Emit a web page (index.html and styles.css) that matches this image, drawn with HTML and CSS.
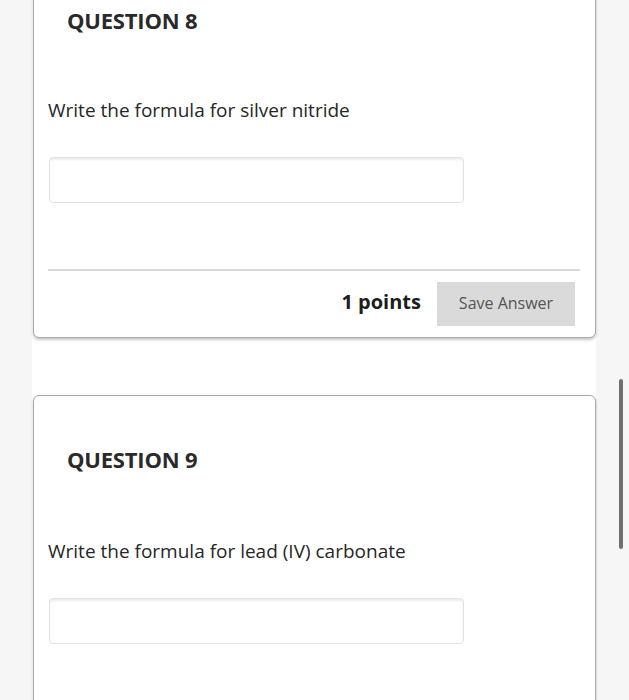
FILE: index.html
```html
<!DOCTYPE html>
<html>
<head>
<meta charset="utf-8">
<link rel="stylesheet" href="styles.css">
</head>
<body>
<div class="page">
  <div class="column">
    <section class="card card-first">
      <h2 class="q-title">QUESTION 8</h2>
      <p class="q-text">Write the formula for silver nitride</p>
      <div class="answer"></div>
      <div class="footer">
        <span class="points">1 points</span>
        <button class="save">Save Answer</button>
      </div>
    </section>
    <section class="card card-next">
      <h2 class="q-title">QUESTION 9</h2>
      <p class="q-text">Write the formula for lead (IV) carbonate</p>
      <div class="answer"></div>
    </section>
  </div>
  <div class="scrollbar"></div>
</div>
</body>
</html>
```
FILE: styles.css
```css
html, body {
  margin: 0;
  padding: 0;
  background: #f6f6f6;
  font-family: "Open Sans", "Liberation Sans", sans-serif;
  color: #222;
  overflow: hidden;
}
.page {
  position: relative;
  height: 700px;
  overflow: hidden;
}
.column {
  margin-left: 32px;
  width: 564px;
  background: #fff;
  min-height: 700px;
  padding-top: 1px;
  box-sizing: border-box;
}
.card {
  width: 563px;
  margin-left: 1px;
  box-sizing: border-box;
  border: 1px solid #a8a8a8;
  border-radius: 6px;
  background: #fff;
  box-shadow: 0 2px 3px rgba(0,0,0,0.22);
  padding: 47px 15px 11px 14px;
}
.card-first {
  margin-top: -44px;
}
.card-next {
  margin-top: 57px;
  min-height: 400px;
  padding-top: 48px;
}
.q-title {
  margin: 0 0 0 19px;
  font-size: 22px;
  line-height: 30px;
  font-weight: 700;
  color: #2a2a2a;
  letter-spacing: -0.2px;
}
.q-text {
  margin: 63px 0 0 0;
  font-size: 19px;
  line-height: 25px;
  color: #262626;
}
.card-next .q-text {
  margin-top: 65px;
}
.answer {
  margin-top: 34px;
  margin-left: 1px;
  width: 415px;
  height: 46px;
  box-sizing: border-box;
  border: 1px solid #e2e2e2;
  border-radius: 4px;
  box-shadow: inset 0 2px 2px rgba(0,0,0,0.07);
}
.footer {
  margin-top: 66px;
  border-top: 2px solid #d9d9d9;
  padding: 11px 5px 0 0;
  display: flex;
  justify-content: flex-end;
  align-items: center;
  gap: 16px;
}
.points {
  font-size: 20px;
  line-height: 24px;
  font-weight: 700;
  color: #1d1d1d;
  margin-bottom: 4px;
}
.save {
  width: 138px;
  height: 44px;
  border: none;
  background: #dadada;
  color: #555;
  font-family: "Open Sans", "Liberation Sans", sans-serif;
  font-size: 16px;
  line-height: 20px;
  padding: 0 0 3px 0;
}
.scrollbar {
  position: absolute;
  left: 619px;
  top: 379px;
  width: 4px;
  height: 170px;
  border-radius: 2px;
  background: #6f6f6f;
}
```
